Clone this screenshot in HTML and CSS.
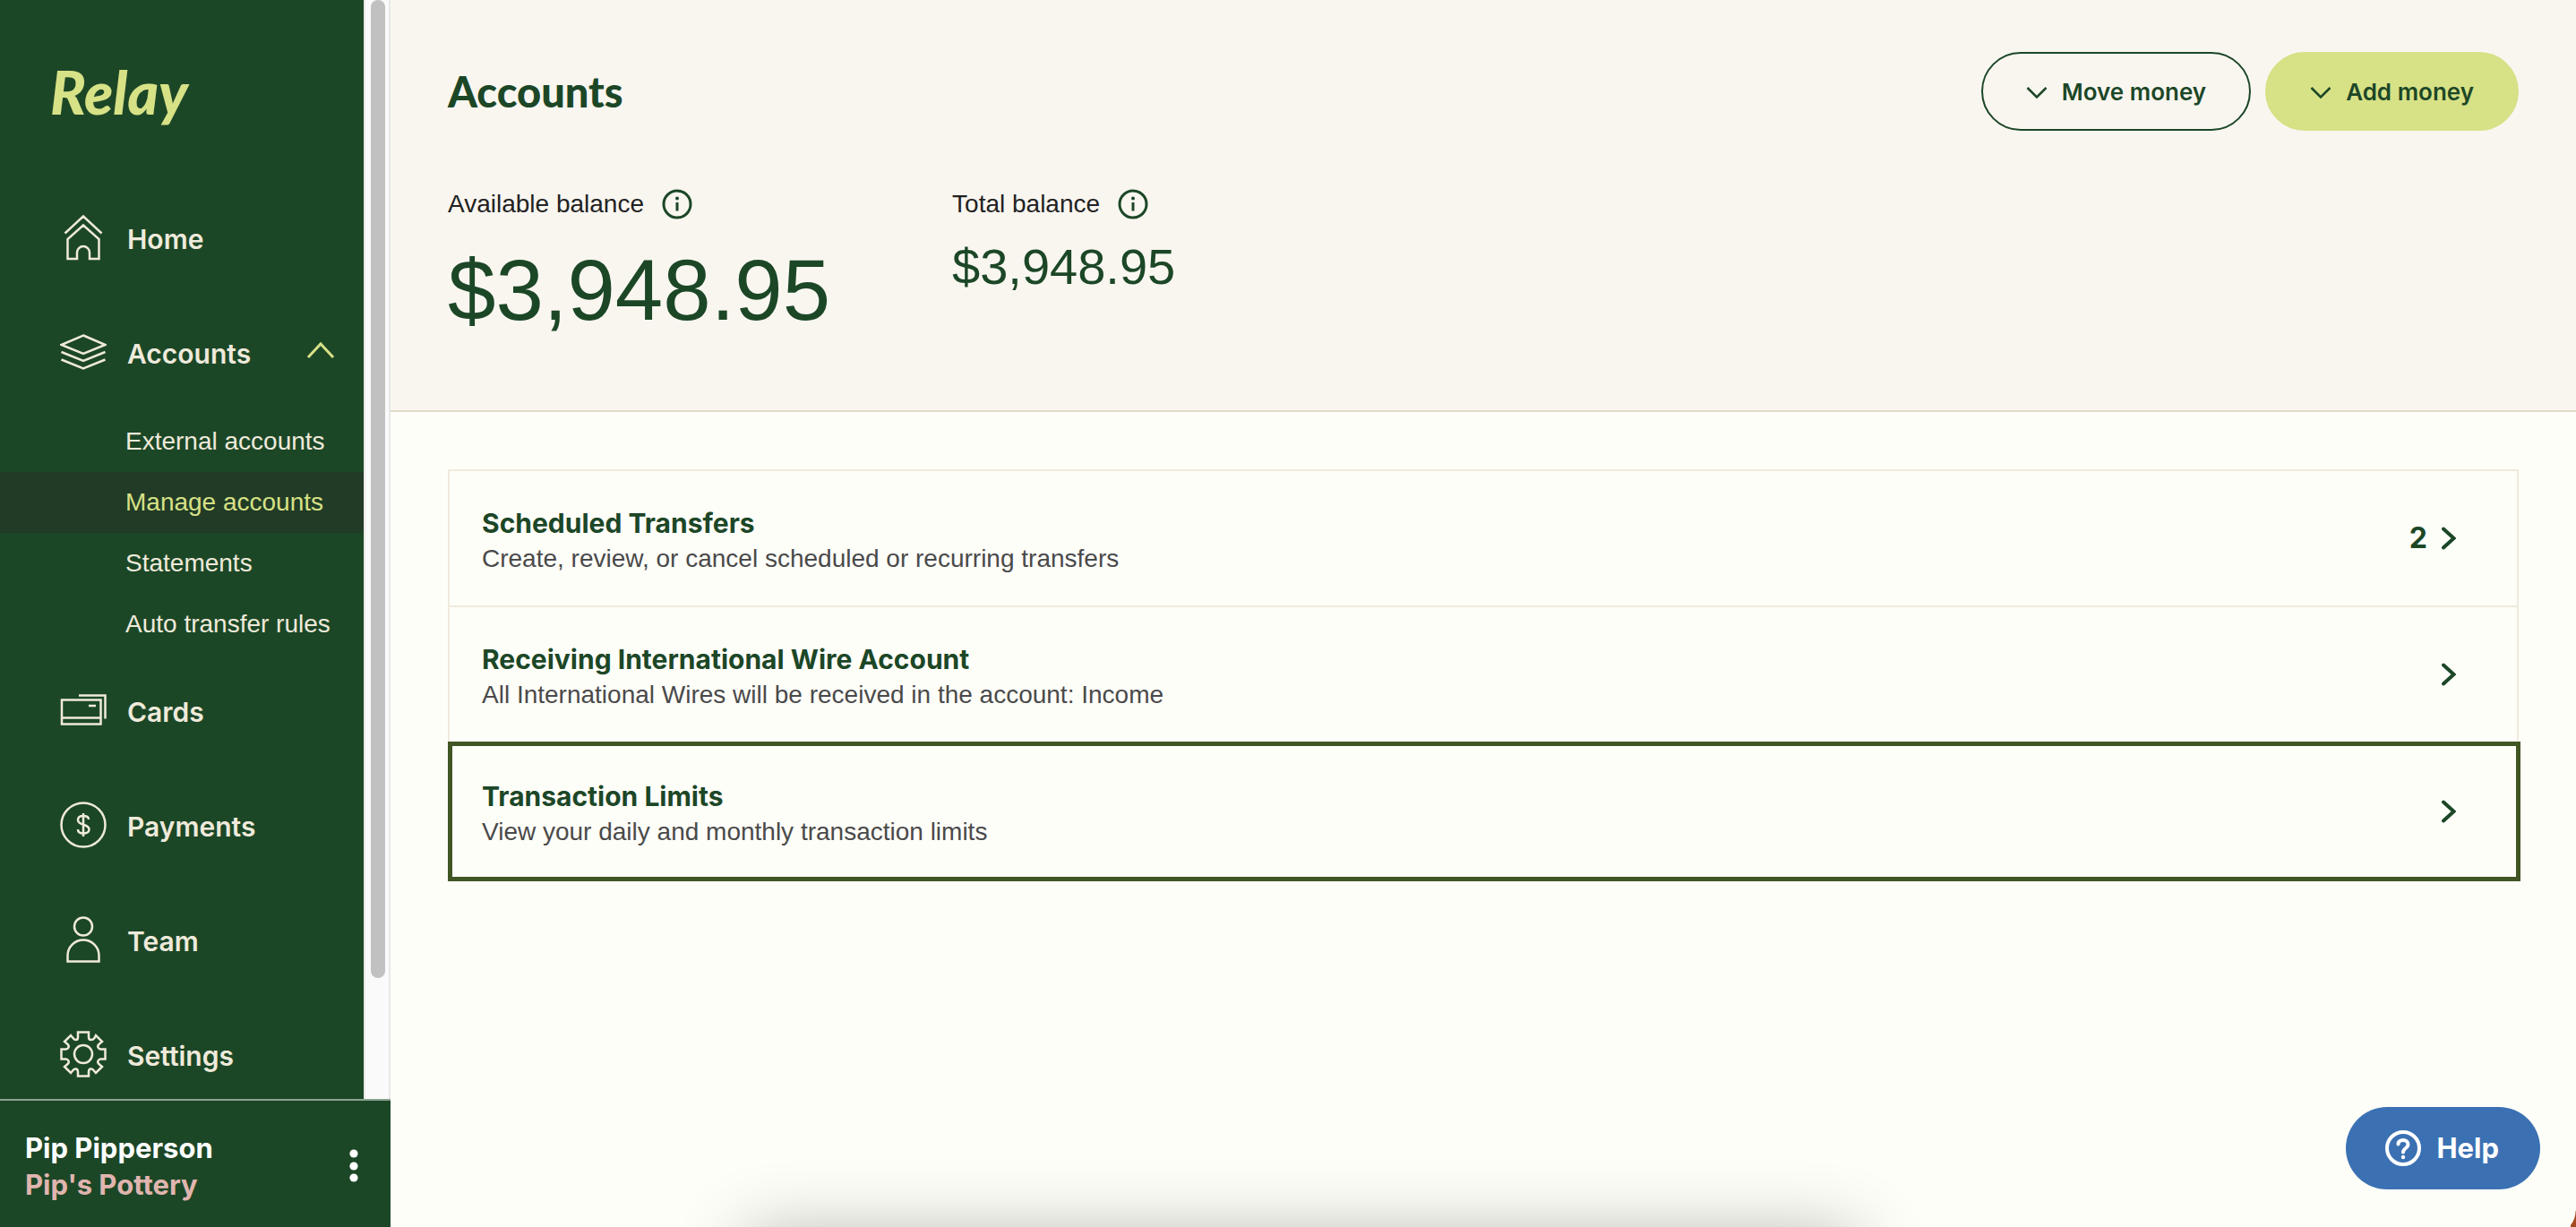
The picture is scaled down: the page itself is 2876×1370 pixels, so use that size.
FILE: index.html
```
<!DOCTYPE html>
<html lang="en">
<head>
<meta charset="utf-8">
<meta name="viewport" content="width=device-width, initial-scale=1">
<title>Accounts – Relay</title>
<link rel="stylesheet" href="styles.css">
</head>
<body>
<div class="app">
  <aside class="sidebar">
    <div class="sidebar-scroll">
      <div class="sidebar-content">
        <a class="logo" href="#">
          <svg width="172" height="88" viewBox="0 0 172 88" role="img" aria-label="Relay"><text class="logo-text" x="0" y="66">Relay</text></svg>
        </a>
        <nav aria-label="Main">
          <ul class="nav">
            <li><a class="nav-item" href="#">
              <svg class="nav-icon" viewBox="0 0 52 52"><path d="M5.500 21.500 26 2.500l20.500 19M8.500 50V28L26 12.500 43.500 28v22h-10.500v-7a7 7 0 0 0-14 0v7z"/></svg>
              <span>Home</span></a></li>
            <li><a class="nav-item" href="#" aria-expanded="true">
              <svg class="nav-icon" viewBox="0 0 52 52"><path d="M26 7.500 50.500 18 26 28 1.500 18zM1.500 26 26 36l24.500-10M1.500 34.500 26 44.500l24.500-10"/></svg>
              <span>Accounts</span>
              <svg class="nav-chevron" viewBox="0 0 32 20"><path d="M2 18 16 3l14 15"/></svg></a>
              <ul class="subnav">
                <li><a class="subnav-item" href="#">External accounts</a></li>
                <li><a class="subnav-item is-active" href="#" aria-current="page">Manage accounts</a></li>
                <li><a class="subnav-item" href="#">Statements</a></li>
                <li><a class="subnav-item" href="#">Auto transfer rules</a></li>
              </ul></li>
            <li><a class="nav-item" href="#">
              <svg class="nav-icon" viewBox="0 0 52 52"><path d="M2 14.500h43.500v27H2zM2 34.500h43.500M32 21h8M21 9.500h29.500v26"/></svg>
              <span>Cards</span></a></li>
            <li><a class="nav-item" href="#">
              <svg class="nav-icon" viewBox="0 0 52 52"><circle cx="26" cy="26" r="24.500"/><path d="M26 13v26M32 20c0-2.500-2.500-4-6-4s-6 1.500-6 4.500c0 6.500 12.500 4 12.500 10.500 0 3-3 4.500-6.500 4.500s-6-1.500-6-4.500"/></svg>
              <span>Payments</span></a></li>
            <li><a class="nav-item" href="#">
              <svg class="nav-icon" viewBox="0 0 52 52"><circle cx="26" cy="11.500" r="10"/><path d="M8.500 50.500V44a17.500 17.500 0 0 1 35 0v6.500z"/></svg>
              <span>Team</span></a></li>
            <li><a class="nav-item" href="#">
              <svg class="nav-icon" viewBox="0 0 52 52"><circle cx="26" cy="26" r="10"/><path d="M20 1.500h12V7q0 3 2.500 3t4-2L40 5l7 7-3 2.500q-2.500 2-1.500 4t3 2h5v11h-5q-2 0-3 2t1.500 4L47 40l-7 7-2.500-3q-1.500-2-3.500-1.500t-2 3.500v4.500H20V46q0-3-2-3.500t-3.500 1.500L12 47l-7-7 3-2.500q2.500-2 1.500-4t-3-2h-5v-11h5q2 0 3-2t-1.500-4L5 12l7-7 2.500 3q1.500 2 3.500 2t2-3z"/></svg>
              <span>Settings</span></a></li>
          </ul>
        </nav>
      </div>
      <div class="scroll-track"><div class="scroll-thumb"></div></div>
    </div>
    <div class="user">
      <div>
        <p class="user-name">Pip Pipperson</p>
        <p class="user-company">Pip's Pottery</p>
      </div>
      <button class="user-menu" type="button" aria-label="User menu">
        <svg width="10" height="38" viewBox="0 0 10 38"><circle cx="5" cy="5" r="4.600"/><circle cx="5" cy="19" r="4.600"/><circle cx="5" cy="32" r="4.600"/></svg>
      </button>
    </div>
  </aside>

  <main class="main">
    <header class="header">
      <div class="header-top">
        <h1 class="title">Accounts</h1>
        <div class="actions">
          <button class="btn btn-outline" type="button"><svg class="btn-chevron" viewBox="0 0 24 14"><path d="M1.500 2 12 12.500 22.500 2"/></svg>Move money</button>
          <button class="btn btn-solid" type="button"><svg class="btn-chevron" viewBox="0 0 24 14"><path d="M1.500 2 12 12.500 22.500 2"/></svg>Add money</button>
        </div>
      </div>
      <dl class="balances">
        <div>
          <dt class="balance-label">Available balance <svg class="info" viewBox="0 0 34 34"><circle class="info-ring" cx="17" cy="17" r="15"/><circle cx="17" cy="10.500" r="2"/><path d="M17 15v9.500"/></svg></dt>
          <dd class="balance-large">$3,948.95</dd>
        </div>
        <div>
          <dt class="balance-label">Total balance <svg class="info" viewBox="0 0 34 34"><circle class="info-ring" cx="17" cy="17" r="15"/><circle cx="17" cy="10.500" r="2"/><path d="M17 15v9.500"/></svg></dt>
          <dd class="balance-small">$3,948.95</dd>
        </div>
      </dl>
    </header>

    <ul class="options">
      <li><a class="option" href="#">
        <div class="option-body"><h2 class="option-title">Scheduled Transfers</h2><p class="option-text">Create, review, or cancel scheduled or recurring transfers</p></div>
        <div class="option-end"><span class="option-count">2</span><svg class="option-chevron" viewBox="0 0 16 26"><path d="M2 2.500 13.500 13 2 23.500"/></svg></div></a></li>
      <li><a class="option" href="#">
        <div class="option-body"><h2 class="option-title">Receiving International Wire Account</h2><p class="option-text">All International Wires will be received in the account: Income</p></div>
        <div class="option-end"><svg class="option-chevron" viewBox="0 0 16 26"><path d="M2 2.500 13.500 13 2 23.500"/></svg></div></a></li>
      <li><a class="option is-highlighted" href="#">
        <div class="option-body"><h2 class="option-title">Transaction Limits</h2><p class="option-text">View your daily and monthly transaction limits</p></div>
        <div class="option-end"><svg class="option-chevron" viewBox="0 0 16 26"><path d="M2 2.500 13.500 13 2 23.500"/></svg></div></a></li>
    </ul>
  </main>
</div>

<div class="dock-shadow"></div>
<button class="help" type="button"><svg width="42" height="42" viewBox="0 0 42 42"><circle class="help-ring" cx="21" cy="21" r="18"/><path d="M15.500 16.500c0-3 2.500-4.500 5.500-4.500s5.500 2 5.500 5c0 4-5.500 4-5.500 8.500"/><circle class="help-dot" cx="21" cy="31" r="2.200"/></svg>Help</button>
<div class="window-corner"></div>
</body>
</html>
```
FILE: styles.css
```
:root {
  --green: #1c4727;
  --green-dark: #213b26;
  --lime: #d7e186;
  --cream: #efeadb;
  --page: #fefef9;
  --line: #efebdc;
}

* { box-sizing: border-box; }

body, h1, h2, p, ul, dl, dd { margin: 0; padding: 0; }

ul { list-style: none; }

a { color: inherit; text-decoration: none; }

button { font: inherit; cursor: pointer; }

svg { flex: none; }

body {
  background: var(--page);
  color: #222;
  font: 400 28px/36px "Liberation Sans", Arial, sans-serif;
}

.app {
  display: grid;
  grid-template-columns: 436px minmax(0, 1fr);
  min-height: 100vh;
}

/* Sidebar */
.sidebar {
  position: sticky;
  top: 0;
  display: flex;
  flex-direction: column;
  height: 100vh;
  background: var(--green);
  color: var(--cream);
}

.sidebar-scroll {
  display: flex;
  flex: 1;
  min-height: 0;
}

.sidebar-content {
  flex: 1;
  overflow: hidden;
}

.scroll-track {
  width: 30px;
  padding-left: 6px;
  background: #fafafa;
  border: solid #e8e8e8;
  border-width: 0 2px;
}

.scroll-thumb {
  width: 16px;
  height: 89%;
  border-radius: 8px;
  background: #c1c1c1;
}

.logo {
  display: flex;
  height: 203px;
  padding: 62px 0 0 56px;
}

.logo-text {
  font: italic 900 66px Lato, sans-serif;
  fill: var(--lime);
}

.nav-item {
  display: flex;
  align-items: center;
  gap: 23px;
  height: 128px;
  padding: 0 32px 0 67px;
  font: 600 30px/40px Inter, sans-serif;
}

.nav-icon {
  width: 52px;
  height: 52px;
  margin-bottom: 4px;
  fill: none;
  stroke: currentColor;
  stroke-width: 2.5;
}

.nav-chevron {
  width: 32px;
  height: 20px;
  margin: 0 0 8px auto;
  fill: none;
  stroke: var(--lime);
  stroke-width: 3;
}

.subnav-item {
  display: flex;
  align-items: center;
  height: 68px;
  padding-left: 140px;
}

.subnav-item.is-active {
  background: var(--green-dark);
  color: var(--lime);
}

.user {
  display: flex;
  align-items: center;
  justify-content: space-between;
  height: 143px;
  padding: 4px 32px 0 28px;
  border-top: 2px solid #8aa390;
  font: 700 31px/41px Inter, sans-serif;
}

.user-name { color: #fff; }

.user-company { color: #e0b5af; }

.user-menu {
  display: flex;
  padding: 0 4px;
  border: 0;
  background: none;
  fill: #fff;
}

/* Page header */
.header {
  height: 460px;
  padding: 58px 64px 0;
  border-bottom: 2px solid #e3dcca;
  background: #f9f6f0;
}

.header-top {
  display: flex;
  align-items: center;
  justify-content: space-between;
}

.title {
  color: var(--green);
  font: 900 47px/60px Lato, sans-serif;
}

.actions {
  display: flex;
  gap: 16px;
}

.btn {
  display: flex;
  align-items: center;
  gap: 16px;
  height: 88px;
  padding: 2px 48px 0;
  border: 2px solid var(--green);
  border-radius: 44px;
  background: none;
  color: var(--green);
  font: 600 26px/36px Inter, sans-serif;
}

.btn-solid {
  border-color: var(--lime);
  background: var(--lime);
}

.btn-chevron {
  width: 24px;
  height: 14px;
  fill: none;
  stroke: currentColor;
  stroke-width: 2.5;
}

.balances {
  display: flex;
  gap: 136px;
  padding-top: 64px;
}

.balance-label {
  display: flex;
  align-items: center;
  gap: 20px;
}

.info {
  width: 34px;
  height: 34px;
  fill: var(--green);
  stroke: var(--green);
  stroke-width: 3;
}

.info circle { stroke: none; }

.info .info-ring {
  fill: none;
  stroke: var(--green);
}

.balance-large,
.balance-small { color: var(--green); }

.balance-large {
  padding-top: 22px;
  font-size: 96px;
  line-height: 112px;
}

.balance-small {
  padding-top: 20px;
  font-size: 56px;
  line-height: 64px;
}

/* Options list */
.options { padding: 64px 64px 120px; }

.option {
  display: flex;
  align-items: center;
  justify-content: space-between;
  height: 152px;
  padding: 0 68px 0 36px;
  border: 2px solid var(--line);
  border-bottom: 0;
}

/* The highlight frame reaches slightly past the list's right edge */
.option.is-highlighted {
  height: 156px;
  margin-right: -2px;
  padding: 0 67px 0 33px;
  border: 5px solid #405624;
}

.option-body { padding-top: 5px; }

.option-title {
  color: var(--green);
  font: 700 30px/40px Inter, sans-serif;
}

.option-text {
  color: #4a4a4a;
  line-height: 40px;
}

.option-end {
  display: flex;
  align-items: center;
  gap: 16px;
  color: var(--green);
}

.option-count { font: 700 32px/40px Inter, sans-serif; }

.option-chevron {
  width: 16px;
  height: 26px;
  fill: none;
  stroke: currentColor;
  stroke-width: 4;
  stroke-linecap: round;
}

/* Floating items */
.help {
  position: fixed;
  right: 40px;
  bottom: 42px;
  display: flex;
  align-items: center;
  gap: 16px;
  height: 92px;
  padding: 0 46px 0 43px;
  border: 0;
  border-radius: 46px;
  background: #3b71b3;
  color: #fff;
  font: 700 31px/40px Inter, sans-serif;
}

.help svg {
  fill: none;
  stroke: #fff;
  stroke-width: 4;
  stroke-linecap: round;
}

.help .help-dot {
  fill: #fff;
  stroke: none;
}

.dock-shadow {
  position: fixed;
  top: calc(100% + 10px);
  left: 29%;
  right: 28%;
  height: 200px;
  box-shadow: 0 0 80px rgba(0, 0, 0, 0.3);
  pointer-events: none;
}

.window-corner {
  position: fixed;
  right: 0;
  bottom: 0;
  width: 6px;
  height: 18px;
  background: radial-gradient(circle at -20px 0, transparent 25px, #a5491f 26px);
}
```
